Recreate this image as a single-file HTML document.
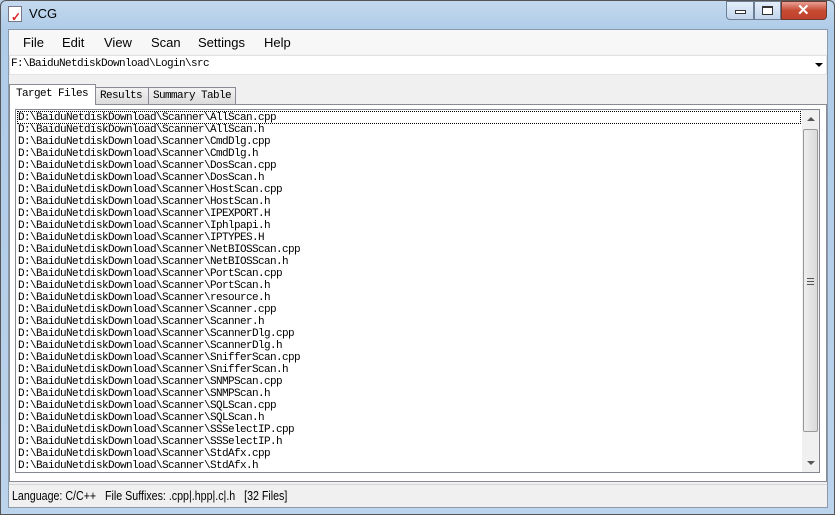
<!DOCTYPE html>
<html><head><style>
*{margin:0;padding:0;box-sizing:border-box}
body{width:835px;height:515px;overflow:hidden;background:#b9d1ea;position:relative;font-family:"Liberation Sans",sans-serif}
.abs{position:absolute}
.mono{font-family:"Liberation Mono","Noto Sans CJK SC",monospace;font-size:11px;letter-spacing:-0.6px;color:#000}
</style></head><body>
<div class="abs" style="left:0;top:0;width:835px;height:515px;background:linear-gradient(#c4d9ee,#aecbe8 30px,#bcd3ec);border:1px solid #555;border-radius:6px 6px 0 0"></div>
<div class="abs" style="left:8px;top:6px;width:14px;height:16px;background:#fff;border:1px solid #778;"></div>
<div class="abs" style="left:11px;top:10px;color:#d22;font-size:12px;font-weight:bold">✓</div>
<div class="abs" style="left:29px;top:6px;font-size:13px;color:#000">VCG</div>
<div class="abs" style="left:726px;top:1px;width:28px;height:19px;border:1px solid #6d7f96;border-radius:0 0 0 4px;background:linear-gradient(#e4eefa,#c2d5ec)"></div>
<div class="abs" style="left:735px;top:10px;width:11px;height:4px;border:1px solid #333;background:#fff"></div>
<div class="abs" style="left:754px;top:1px;width:27px;height:19px;border:1px solid #6d7f96;background:linear-gradient(#e4eefa,#c2d5ec)"></div>
<div class="abs" style="left:762px;top:6px;width:11px;height:9px;border:1px solid #333;border-top-width:2px;background:#fff"></div>
<div class="abs" style="left:781px;top:1px;width:46px;height:19px;border:1px solid #6d3a30;border-radius:0 0 4px 0;background:linear-gradient(#e8a093,#c74a33 50%,#c0412c)"></div>
<div class="abs" style="left:797px;top:1px;color:#fff;font-size:15px;font-weight:bold">✕</div>
<div class="abs" style="left:8px;top:29px;width:820px;height:479px;background:#f0f0f0;border:1px solid #8a9aab"></div>
<div class="abs" style="left:9px;top:30px;width:818px;height:24px;background:#f7f7f7"></div>
<div class="abs" style="left:23px;top:35px;font-size:13px">File</div>
<div class="abs" style="left:62px;top:35px;font-size:13px">Edit</div>
<div class="abs" style="left:104px;top:35px;font-size:13px">View</div>
<div class="abs" style="left:151px;top:35px;font-size:13px">Scan</div>
<div class="abs" style="left:198px;top:35px;font-size:13px">Settings</div>
<div class="abs" style="left:264px;top:35px;font-size:13px">Help</div>
<div class="abs" style="left:9px;top:55px;width:818px;height:20px;background:#fff;border:1px solid #e3e3e3"></div>
<div class="abs mono" style="left:11px;top:58px">F:\BaiduNetdiskDownload\Login\src</div>
<div class="abs" style="left:815px;top:63px;border-left:4px solid transparent;border-right:4px solid transparent;border-top:4px solid #000"></div>
<div class="abs" style="left:9px;top:104px;width:818px;height:378px;background:#fff;border:1px solid #898c95"></div>
<div class="abs" style="left:95px;top:87px;width:54px;height:18px;background:linear-gradient(#f2f2f2,#dcdcdc);border:1px solid #898c95"></div>
<div class="abs" style="left:148px;top:87px;width:88px;height:18px;background:linear-gradient(#f2f2f2,#dcdcdc);border:1px solid #898c95"></div>
<div class="abs" style="left:9px;top:84px;width:87px;height:21px;background:#fff;border:1px solid #898c95;border-bottom:none"></div>
<div class="abs mono" style="left:16px;top:88px">Target Files</div>
<div class="abs mono" style="left:100px;top:90px">Results</div>
<div class="abs mono" style="left:153px;top:90px">Summary Table</div>
<div class="abs" style="left:15px;top:109px;width:805px;height:364px;border:1px solid #828790;background:#fff"></div>
<div class="abs" style="left:17px;top:111px;width:784px;height:13px;border:1px dotted #000"></div>
<div class="abs mono" style="left:18px;top:112px;line-height:12px;white-space:pre">D:\BaiduNetdiskDownload\Scanner\AllScan.cpp
D:\BaiduNetdiskDownload\Scanner\AllScan.h
D:\BaiduNetdiskDownload\Scanner\CmdDlg.cpp
D:\BaiduNetdiskDownload\Scanner\CmdDlg.h
D:\BaiduNetdiskDownload\Scanner\DosScan.cpp
D:\BaiduNetdiskDownload\Scanner\DosScan.h
D:\BaiduNetdiskDownload\Scanner\HostScan.cpp
D:\BaiduNetdiskDownload\Scanner\HostScan.h
D:\BaiduNetdiskDownload\Scanner\IPEXPORT.H
D:\BaiduNetdiskDownload\Scanner\Iphlpapi.h
D:\BaiduNetdiskDownload\Scanner\IPTYPES.H
D:\BaiduNetdiskDownload\Scanner\NetBIOSScan.cpp
D:\BaiduNetdiskDownload\Scanner\NetBIOSScan.h
D:\BaiduNetdiskDownload\Scanner\PortScan.cpp
D:\BaiduNetdiskDownload\Scanner\PortScan.h
D:\BaiduNetdiskDownload\Scanner\resource.h
D:\BaiduNetdiskDownload\Scanner\Scanner.cpp
D:\BaiduNetdiskDownload\Scanner\Scanner.h
D:\BaiduNetdiskDownload\Scanner\ScannerDlg.cpp
D:\BaiduNetdiskDownload\Scanner\ScannerDlg.h
D:\BaiduNetdiskDownload\Scanner\SnifferScan.cpp
D:\BaiduNetdiskDownload\Scanner\SnifferScan.h
D:\BaiduNetdiskDownload\Scanner\SNMPScan.cpp
D:\BaiduNetdiskDownload\Scanner\SNMPScan.h
D:\BaiduNetdiskDownload\Scanner\SQLScan.cpp
D:\BaiduNetdiskDownload\Scanner\SQLScan.h
D:\BaiduNetdiskDownload\Scanner\SSSelectIP.cpp
D:\BaiduNetdiskDownload\Scanner\SSSelectIP.h
D:\BaiduNetdiskDownload\Scanner\StdAfx.cpp
D:\BaiduNetdiskDownload\Scanner\StdAfx.h</div>
<div class="abs" style="left:802px;top:110px;width:17px;height:362px;background:#f0f0f0"></div>
<div class="abs" style="left:807px;top:117px;border-left:4px solid transparent;border-right:4px solid transparent;border-bottom:4px solid #555"></div>
<div class="abs" style="left:803px;top:129px;width:15px;height:303px;border:1px solid #999;border-radius:2px;background:linear-gradient(90deg,#eee,#dadada)"></div>
<div class="abs" style="left:807px;top:278px;width:7px;height:7px;border-top:1px solid #555;border-bottom:1px solid #555"></div>
<div class="abs" style="left:807px;top:281px;width:7px;height:1px;background:#555"></div>
<div class="abs" style="left:807px;top:461px;border-left:4px solid transparent;border-right:4px solid transparent;border-top:4px solid #555"></div>
<div class="abs" style="left:9px;top:484px;width:818px;height:23px;background:#f0f0f0;border-top:1px solid #d6d6d6"></div>
<div class="abs" style="left:12px;top:488px;font-size:13px;white-space:pre;color:#000;transform:scaleX(0.82);transform-origin:0 0">Language: C/C++   File Suffixes: .cpp|.hpp|.c|.h   [32 Files]</div>
</body></html>
